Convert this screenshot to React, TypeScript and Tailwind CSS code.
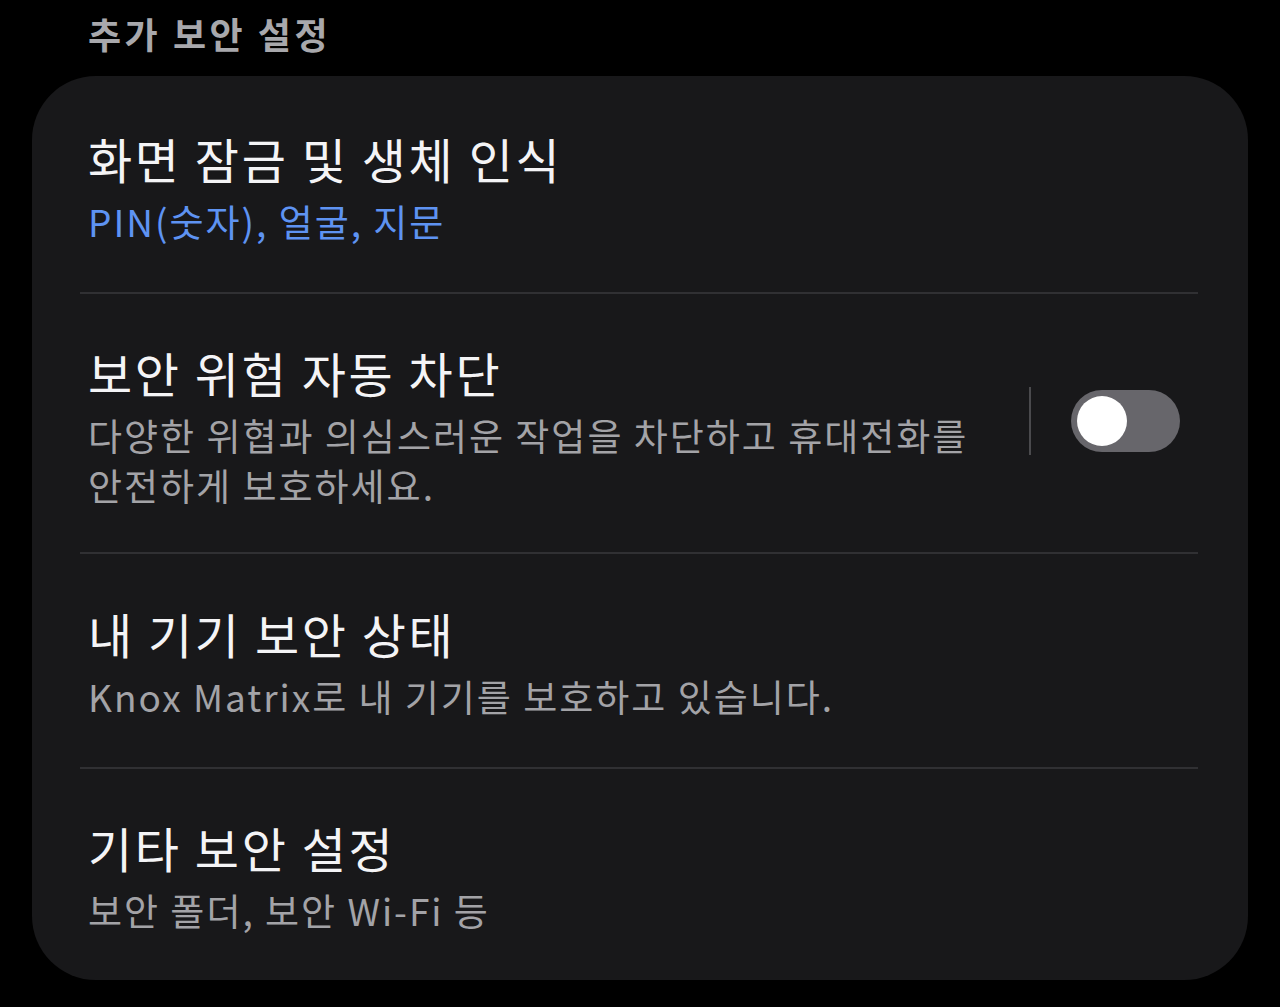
const font = { fontFamily: '"Noto Sans CJK KR", "Noto Sans", sans-serif' };

const Divider = () => <div className="ml-[48px] mr-[50px] h-[2px] bg-[#303033]" />;

const Row = ({
  title,
  sub,
  subClass,
  right,
  pad,
}: {
  title: string;
  sub: React.ReactNode;
  subClass: string;
  right?: React.ReactNode;
  pad: string;
}) => (
  <div className={`flex items-center pl-[56px] pr-[68px] ${pad}`}>
    <div className="flex-1">
      <div className="text-[48px] leading-[64px] font-normal text-[#f4f4f6] tracking-[2.6px]">{title}</div>
      <div className={`mt-[6px] text-[37px] leading-[50px] tracking-[2px] ${subClass}`}>{sub}</div>
    </div>
    {right}
  </div>
);

const App = () => {
  return (
    <div className="w-[1280px] h-[1007px] bg-black overflow-hidden" style={font}>
      <div className="pl-[88px] pt-[8px] h-[76px] text-[36px] leading-[50px] font-bold text-[#a8a8ac] tracking-[3.5px]">
        추가 보안 설정
      </div>
      <div className="ml-[32px] w-[1216px] h-[904px] rounded-[64px] bg-[#18181a]">
        <Row
          pad="pt-[50px] pb-[46px]"
          title="화면 잠금 및 생체 인식"
          sub="PIN(숫자), 얼굴, 지문"
          subClass="text-[#5e93f2]"
        />
        <Divider />
        <Row
          pad="pt-[46px] pb-[42px]"
          title="보안 위험 자동 차단"
          sub={
            <>
              다양한 위협과 의심스러운 작업을 차단하고 휴대전화를
              <br />
              안전하게 보호하세요.
            </>
          }
          subClass="text-[#a3a3a7]"
          right={
            <div className="flex items-center -mt-[8px]">
              <div className="w-[2px] h-[68px] bg-[#4a4a4d] mr-[40px]" />
              <div className="w-[109px] h-[62px] rounded-full bg-[#67666b] flex items-center pl-[6px]">
                <div className="w-[50px] h-[50px] rounded-full bg-white" />
              </div>
            </div>
          }
        />
        <Divider />
        <Row
          pad="pt-[47px] pb-[46px]"
          title="내 기기 보안 상태"
          sub="Knox Matrix로 내 기기를 보호하고 있습니다."
          subClass="text-[#a3a3a7]"
        />
        <Divider />
        <Row
          pad="pt-[46px] pb-[40px]"
          title="기타 보안 설정"
          sub="보안 폴더, 보안 Wi-Fi 등"
          subClass="text-[#a3a3a7]"
        />
      </div>
    </div>
  );
};

export default App;
